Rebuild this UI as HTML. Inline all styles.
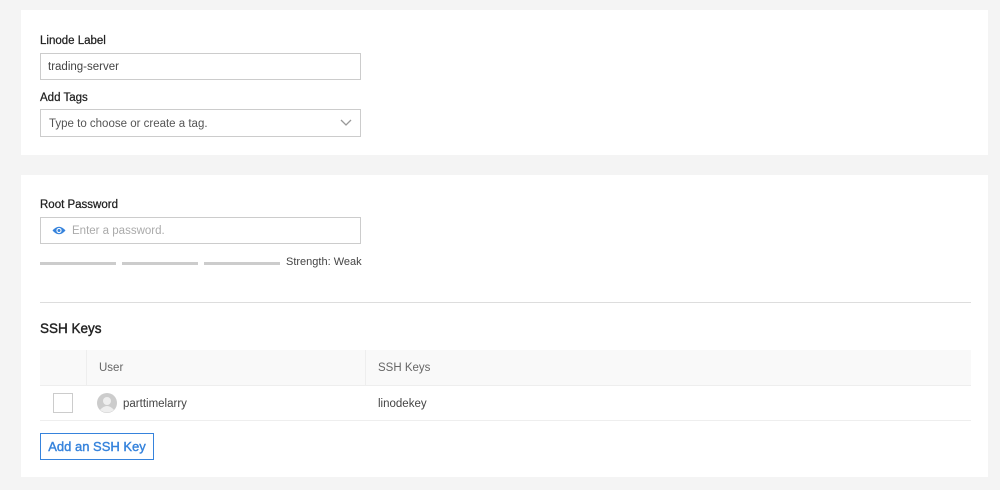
<!DOCTYPE html>
<html><head><style>
body{margin:0;width:1000px;height:490px;background:#f4f4f4;font-family:"Liberation Sans",sans-serif;position:relative;overflow:hidden}
.p{position:absolute;left:21px;width:967px;background:#fff}
.a{position:absolute}
.lbl{font-size:11.5px;color:#222;-webkit-text-stroke:0.25px #222}
.in{border:1px solid #ccc;box-sizing:border-box;background:#fff;font-size:11.5px}
.bar{position:absolute;top:262px;height:3px;width:76px;background:#ccc}
</style></head><body>
<div class="p" style="top:10px;height:145px"></div>
<div class="p" style="top:175px;height:302px"></div>

<div class="a lbl" style="left:40px;top:35px">Linode Label</div>
<div class="a in" style="left:40px;top:53px;width:321px;height:27px;padding:7px 7px;color:#444">trading-server</div>
<div class="a lbl" style="left:40px;top:92px">Add Tags</div>
<div class="a in" style="left:40px;top:109px;width:321px;height:28px;padding:8px 8px;color:#555">Type to choose or create a tag.</div>
<svg class="a" style="left:340px;top:119px" width="12" height="8"><path d="M1 1l5 5 5-5" stroke="#999" stroke-width="1.3" fill="none"/></svg>

<div class="a lbl" style="left:40px;top:199px">Root Password</div>
<div class="a in" style="left:40px;top:217px;width:321px;height:27px;padding:7px 31px;color:#aaa">Enter a password.</div>
<svg class="a" style="left:52px;top:225px" width="14" height="11"><path d="M0.5 5.5Q7 -2 13.5 5.5Q7 13 0.5 5.5Z" fill="#3683dc"/><circle cx="7" cy="5.5" r="2.6" fill="#fff"/><circle cx="7" cy="5.5" r="1.5" fill="#3683dc"/></svg>
<div class="bar" style="left:40px"></div><div class="bar" style="left:122px"></div><div class="bar" style="left:204px"></div>
<div class="a" style="left:286px;top:256px;font-size:11px;color:#444">Strength: Weak</div>

<div class="a" style="left:40px;top:302px;width:931px;height:1px;background:#ddd"></div>
<div class="a" style="left:40px;top:321px;font-size:13.5px;color:#222;-webkit-text-stroke:0.4px #222">SSH Keys</div>

<div class="a" style="left:40px;top:350px;width:931px;height:35px;background:#f9f9f9;border-bottom:1px solid #eee"></div>
<div class="a" style="left:86px;top:350px;width:1px;height:35px;background:#eee"></div>
<div class="a" style="left:365px;top:350px;width:1px;height:35px;background:#eee"></div>
<div class="a" style="left:99px;top:362px;font-size:11.5px;color:#666">User</div>
<div class="a" style="left:378px;top:362px;font-size:11.5px;color:#666">SSH Keys</div>
<div class="a" style="left:53px;top:393px;width:20px;height:20px;border:1px solid #ccc;box-sizing:border-box"></div>
<svg class="a" style="left:97px;top:393px" width="20" height="20"><circle cx="10" cy="10" r="10" fill="#ccc"/><circle cx="10" cy="8" r="4" fill="#eee"/><path d="M3 17Q10 9 17 17Q10 22 3 17Z" fill="#eee"/></svg>
<div class="a" style="left:123px;top:398px;font-size:11.5px;color:#444">parttimelarry</div>
<div class="a" style="left:378px;top:398px;font-size:11.5px;color:#444">linodekey</div>
<div class="a" style="left:40px;top:420px;width:931px;height:1px;background:#eee"></div>

<div class="a" style="left:40px;top:433px;width:114px;height:27px;border:1px solid #3683dc;box-sizing:border-box;color:#3683dc;font-size:13px;-webkit-text-stroke:0.4px #3683dc;text-align:center;line-height:26px">Add an SSH Key</div>
</body></html>
